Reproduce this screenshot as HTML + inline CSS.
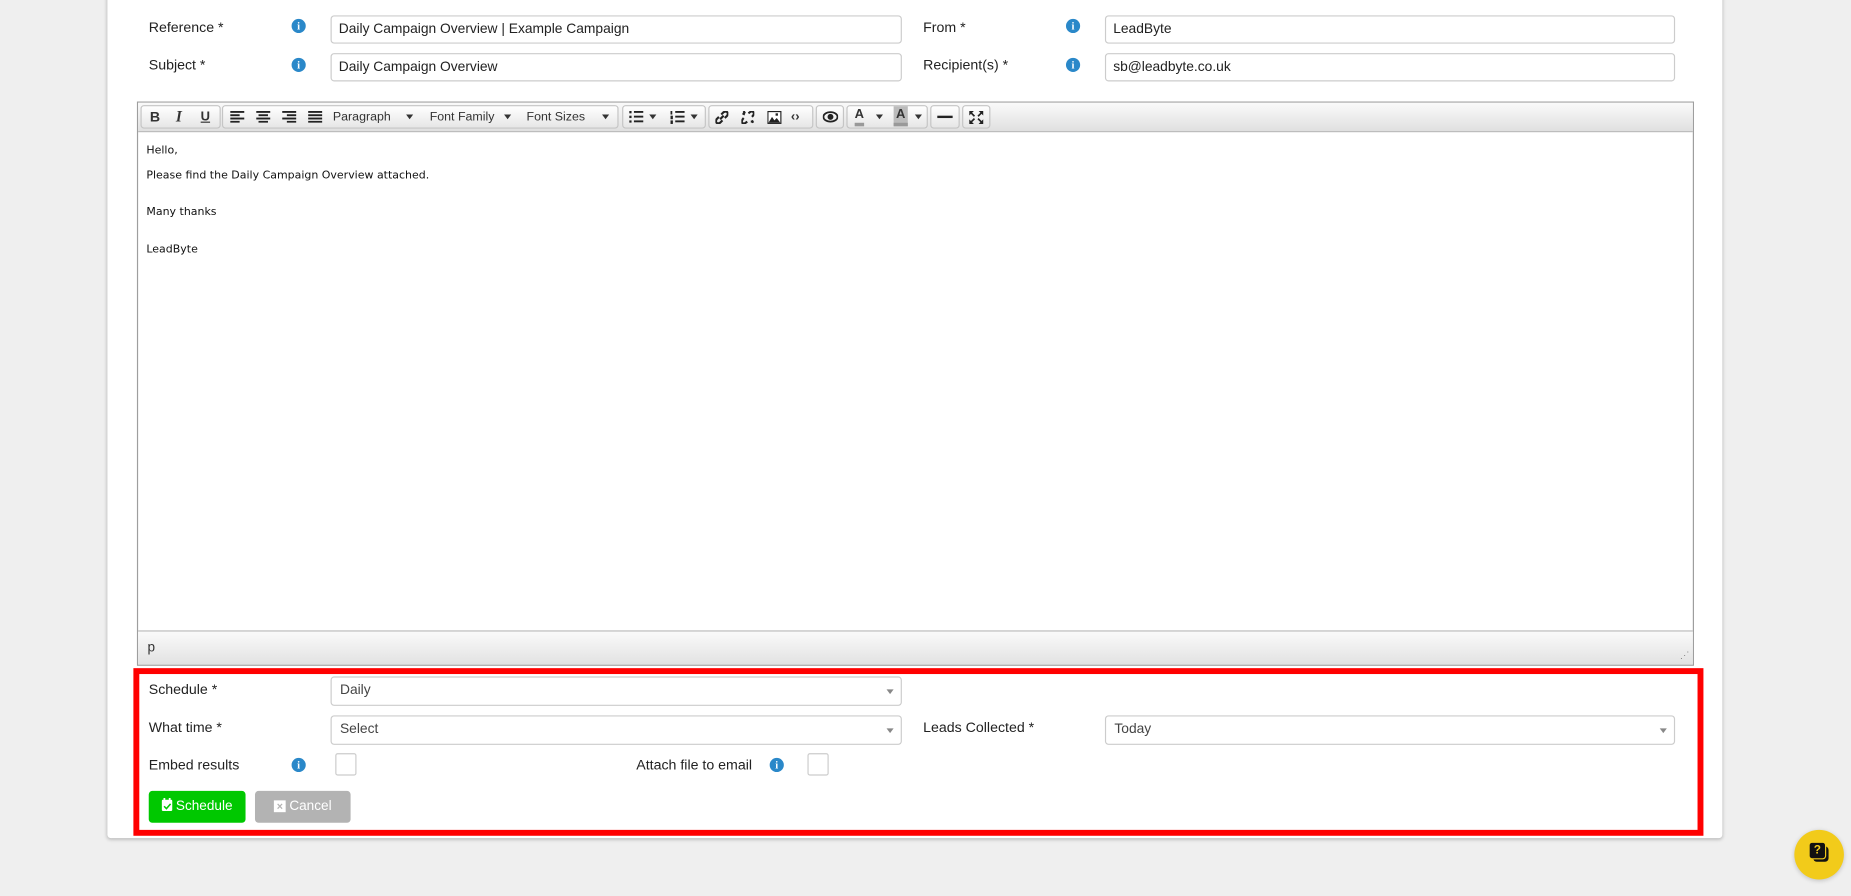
<!DOCTYPE html>
<html><head><meta charset="utf-8"><style>
html,body{margin:0;padding:0;width:1851px;height:896px;overflow:hidden;background:#efefef;}
#w{position:absolute;left:0;top:0;width:1568px;height:759px;transform:scale(1.18048);transform-origin:0 0;font-family:"Liberation Sans",Arial,sans-serif;color:#222;}
.a{position:absolute;}
.card{left:91px;top:-5px;width:1368px;height:715px;background:#fff;box-shadow:0 1px 3px rgba(0,0,0,.25);border-radius:0 0 3px 3px;}
.lbl{font-size:12px;color:#222;}
.inp{background:#fff;border:1px solid #ccc;border-radius:3px;height:24px;box-sizing:border-box;font-size:11.7px;line-height:22px;padding-left:6px;color:#222;}
.sel{color:#444;}
.sel:after{content:"";position:absolute;right:6px;top:10px;border:3.5px solid transparent;border-top:4px solid #888;border-bottom:0;}
.info{width:12px;height:12px;border-radius:50%;background:#2a88c9;color:#fff;font-size:9px;font-weight:bold;text-align:center;line-height:12px;font-family:"Liberation Serif",serif;}
.ed{left:116px;top:86px;width:1319px;height:478px;border:1px solid #9e9e9e;box-sizing:border-box;}
.tb{left:0;top:0;width:100%;height:24px;background:linear-gradient(#fafafa,#e0e0e0);border-bottom:1px solid #bbb;}
.g{position:absolute;top:2px;height:20px;border:1px solid #c5c5c5;border-radius:3px;background:linear-gradient(#fff,#e6e6e6);box-sizing:border-box;font-size:10.5px;line-height:18px;color:#333;}
.g span,.g svg{position:absolute;top:0;}
.g svg{top:4px;}
.ct{font-family:"DejaVu Sans",Verdana,sans-serif;font-size:9.3px;color:#111;}
.sb{left:0;bottom:0;width:100%;height:29px;background:linear-gradient(#fafafa,#e2e2e2);border-top:1px solid #bbb;box-sizing:border-box;}
.cb{width:18px;height:19px;border:1px solid #ccc;border-radius:2px;background:#fff;box-sizing:border-box;}
.btn{height:27px;border-radius:3px;color:#fff;font-size:11.5px;line-height:27px;text-align:center;}
.dd{display:inline-block;border:3px solid transparent;border-top:4px solid #333;border-bottom:0;vertical-align:middle;}
</style></head><body><div id="w">
<div class="a card"></div>

<div class="a lbl" style="left:126px;top:16px">Reference *</div>
<div class="a info" style="left:247px;top:16px">i</div>
<div class="a inp" style="left:280px;top:13px;width:484px">Daily Campaign Overview | Example Campaign</div>
<div class="a lbl" style="left:782px;top:16px">From *</div>
<div class="a info" style="left:903px;top:16px">i</div>
<div class="a inp" style="left:936px;top:13px;width:483px">LeadByte</div>

<div class="a lbl" style="left:126px;top:48px">Subject *</div>
<div class="a info" style="left:247px;top:49px">i</div>
<div class="a inp" style="left:280px;top:45px;width:484px">Daily Campaign Overview</div>
<div class="a lbl" style="left:782px;top:48px">Recipient(s) *</div>
<div class="a info" style="left:903px;top:49px">i</div>
<div class="a inp" style="left:936px;top:45px;width:483px">sb@leadbyte.co.uk</div>

<div class="a ed">
 <div class="a tb">
  <div class="g" style="left:2px;width:68px"><span style="left:7px;font-weight:bold;font-size:12px">B</span><span style="left:29px;font-style:italic;font-size:13px;font-family:'Liberation Serif',serif;font-weight:bold">I</span><span style="left:50px;text-decoration:underline;font-size:11px;font-weight:bold">U</span></div>
  <div class="g" style="left:71px;width:336px">
   <svg style="left:6px" width="12" height="10"><g fill="#222"><rect x="0" y="0" width="12" height="1.6"/><rect x="0" y="2.8" width="8" height="1.6"/><rect x="0" y="5.6" width="12" height="1.6"/><rect x="0" y="8.4" width="8" height="1.6"/></g></svg>
   <svg style="left:28px" width="12" height="10"><g fill="#222"><rect x="0" y="0" width="12" height="1.6"/><rect x="2" y="2.8" width="8" height="1.6"/><rect x="0" y="5.6" width="12" height="1.6"/><rect x="2" y="8.4" width="8" height="1.6"/></g></svg>
   <svg style="left:50px" width="12" height="10"><g fill="#222"><rect x="0" y="0" width="12" height="1.6"/><rect x="4" y="2.8" width="8" height="1.6"/><rect x="0" y="5.6" width="12" height="1.6"/><rect x="4" y="8.4" width="8" height="1.6"/></g></svg>
   <svg style="left:72px" width="12" height="10"><g fill="#222"><rect x="0" y="0" width="12" height="1.6"/><rect x="0" y="2.8" width="12" height="1.6"/><rect x="0" y="5.6" width="12" height="1.6"/><rect x="0" y="8.4" width="12" height="1.6"/></g></svg>
   <span style="left:93px">Paragraph</span><span style="left:155px"><i class="dd"></i></span><span style="left:175px">Font Family</span><span style="left:238px"><i class="dd"></i></span><span style="left:257px">Font Sizes</span><span style="left:321px"><i class="dd"></i></span></div>
  <div class="g" style="left:410px;width:71px">
   <svg style="left:5px" width="12" height="10"><g fill="#222"><rect x="0" y="0" width="2" height="2"/><rect x="4" y="0" width="8" height="1.6"/><rect x="0" y="4" width="2" height="2"/><rect x="4" y="4" width="8" height="1.6"/><rect x="0" y="8" width="2" height="2"/><rect x="4" y="8" width="8" height="1.6"/></g></svg>
   <span style="left:22px"><i class="dd"></i></span>
   <svg style="left:40px" width="12" height="11"><g fill="#222"><rect x="0" y="0" width="1.5" height="3"/><rect x="4" y="0" width="8" height="1.6"/><rect x="0" y="4" width="2" height="3"/><rect x="4" y="4" width="8" height="1.6"/><rect x="0" y="8" width="2" height="3"/><rect x="4" y="8" width="8" height="1.6"/></g></svg>
   <span style="left:57px"><i class="dd"></i></span></div>
  <div class="g" style="left:483px;width:89px">
   <svg style="left:5px" width="11" height="11"><g fill="none" stroke="#222" stroke-width="1.8"><path d="M4 7 L7 4"/><path d="M5 3 L7 1 Q9 0 10 1 Q11 2 10 4 L8 6"/><path d="M6 8 L4 10 Q2 11 1 10 Q0 9 1 7 L3 5"/></g></svg>
   <svg style="left:27px" width="11" height="11"><g fill="none" stroke="#222" stroke-width="1.8"><path d="M6 2 L8 0.5 Q10 0 10.5 1.5 Q11 3 9 5"/><path d="M5 9 L3 10.5 Q1 11 0.5 9.5 Q0 8 2 6"/><path d="M1 2 L3 3 M9 8 L10 10 M2 0 L3 2 M8 9 L10 9"/></g></svg>
   <svg style="left:49px" width="12" height="11"><rect x="0.5" y="0.5" width="11" height="10" fill="#fff" stroke="#222"/><path d="M1 10 L4 5 L6 8 L8 6 L11 10Z" fill="#222"/><rect x="7" y="2" width="2" height="2" fill="#222"/></svg>
   <span style="left:69px;font-weight:bold;font-size:11px">‹›</span></div>
  <div class="g" style="left:574px;width:24px"><svg style="left:5px" width="13" height="10"><ellipse cx="6.5" cy="5" rx="6" ry="4" fill="none" stroke="#222" stroke-width="1.5"/><circle cx="6.5" cy="5" r="2.5" fill="#222"/></svg></div>
  <div class="g" style="left:600px;width:69px"><span style="left:6px;font-weight:bold;font-size:11px;border-bottom:3px solid #999;line-height:14px">A</span><span style="left:24px"><i class="dd"></i></span><span style="left:39px;font-weight:bold;font-size:11px;background:#bbb;line-height:14px;border-bottom:3px solid #999;padding:0 2px">A</span><span style="left:57px"><i class="dd"></i></span></div>
  <div class="g" style="left:671px;width:25px"><span style="left:5px;top:8px;width:13px;height:2px;background:#222"></span></div>
  <div class="g" style="left:698px;width:24px"><svg style="left:5px" width="12" height="11"><g fill="#222"><path d="M0 0 H4 L2.5 1.5 L5 4 L4 5 L1.5 2.5 L0 4Z"/><path d="M12 0 V4 L10.5 2.5 L8 5 L7 4 L9.5 1.5 L8 0Z"/><path d="M0 11 V7 L1.5 8.5 L4 6 L5 7 L2.5 9.5 L4 11Z"/><path d="M12 11 H8 L9.5 9.5 L7 7 L8 6 L10.5 8.5 L12 7Z"/></g></svg></div>
 </div>
 <div class="a ct" style="left:7px;top:35px">Hello,</div>
 <div class="a ct" style="left:7px;top:56px">Please find the Daily Campaign Overview attached.</div>
 <div class="a ct" style="left:7px;top:87px">Many thanks</div>
 <div class="a ct" style="left:7px;top:119px">LeadByte</div>
 <div class="a sb"><div class="a" style="left:8px;top:8px;font-size:11.5px;color:#333">p</div><div class="a" style="right:3px;bottom:3px;font-size:8px;color:#888">⋰</div></div>
</div>

<div class="a" style="left:113px;top:566px;width:1330px;height:142px;border:5px solid #ff0000;box-sizing:border-box"></div>

<div class="a lbl" style="left:126px;top:577px">Schedule *</div>
<div class="a inp sel" style="left:280px;top:573px;width:484px;padding-left:7px;height:25px">Daily</div>
<div class="a lbl" style="left:126px;top:609px">What time *</div>
<div class="a inp sel" style="left:280px;top:606px;width:484px;padding-left:7px;height:25px">Select</div>
<div class="a lbl" style="left:782px;top:609px">Leads Collected *</div>
<div class="a inp sel" style="left:936px;top:606px;width:483px;padding-left:7px;height:25px">Today</div>

<div class="a lbl" style="left:126px;top:641px">Embed results</div>
<div class="a info" style="left:247px;top:642px">i</div>
<div class="a cb" style="left:284px;top:638px"></div>
<div class="a lbl" style="left:539px;top:641px">Attach file to email</div>
<div class="a info" style="left:652px;top:642px">i</div>
<div class="a cb" style="left:684px;top:638px"></div>

<div class="a btn" style="left:126px;top:670px;width:82px;background:#00c800"><svg width="9" height="11" style="vertical-align:-1px;margin-right:3px"><rect x="0" y="1.5" width="9" height="9.5" rx="1" fill="#fff"/><rect x="1.5" y="0" width="1.5" height="3" fill="#fff"/><rect x="6" y="0" width="1.5" height="3" fill="#fff"/><path d="M2 7 L4 9 L7.5 5" stroke="#00c800" stroke-width="1.3" fill="none"/></svg>Schedule</div>
<div class="a btn" style="left:216px;top:670px;width:81px;background:#b3b3b3"><span style="display:inline-block;width:10px;height:10px;background:#fff;color:#b3b3b3;font-size:9px;line-height:10px;vertical-align:0;margin-right:3px;font-weight:bold">×</span>Cancel</div>

<div class="a" style="left:1520px;top:703px;width:42px;height:42px;border-radius:50%;background:#f2cb1a;box-shadow:0 1px 4px rgba(0,0,0,.2)">
 <div class="a" style="left:16px;top:14px;width:13px;height:13px;background:#111;border-radius:3px"></div>
 <div class="a" style="left:12px;top:10px;width:13px;height:13px;background:#111;border:1.5px solid #f2cb1a;border-radius:3px;color:#f2cb1a;font-size:10px;font-weight:bold;text-align:center;line-height:13px">?</div>
</div>
</div></body></html>
